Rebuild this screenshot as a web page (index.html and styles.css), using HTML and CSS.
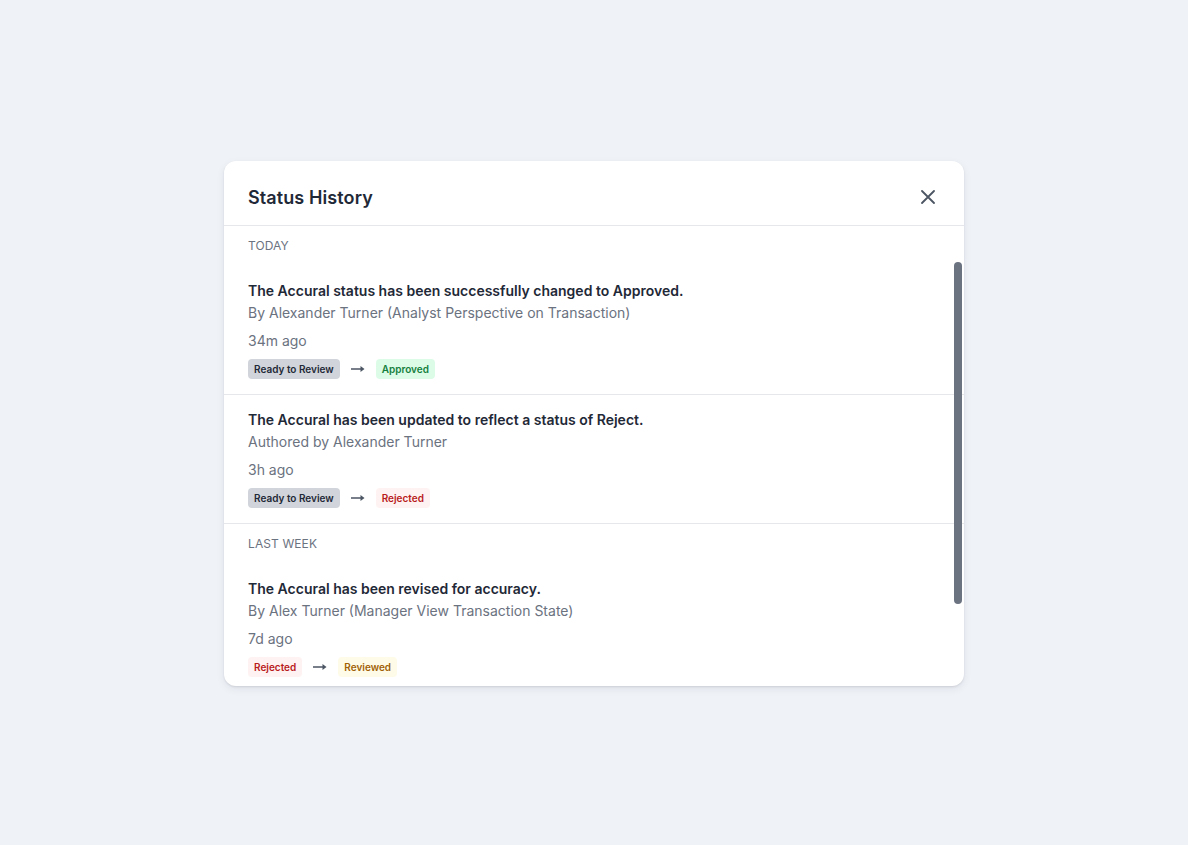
FILE: index.html
```html
<!DOCTYPE html>
<html lang="en">
<head>
<meta charset="utf-8">
<title>Status History</title>
<link rel="stylesheet" href="styles.css">
</head>
<body>
<div class="page">
  <div class="modal">
    <div class="modal-header">
      <h2 class="modal-title">Status History</h2>
      <button class="close-btn" aria-label="Close">
        <svg width="14" height="14" viewBox="0 0 14 14" fill="none"><path d="M1 1L13 13M13 1L1 13" stroke="#4b5563" stroke-width="1.8" stroke-linecap="round"/></svg>
      </button>
    </div>
    <div class="modal-body">
      <div class="scroll-thumb"></div>
      <div class="group-label">Today</div>
      <div class="item">
        <div class="item-title">The Accural status has been successfully changed to Approved.</div>
        <div class="item-sub">By Alexander Turner (Analyst Perspective on Transaction)</div>
        <div class="item-time">34m ago</div>
        <div class="badges">
          <span class="badge badge-gray">Ready to Review</span>
          <svg class="arrow" width="14" height="8" viewBox="0 0 14 8"><path d="M0 4H11" stroke="#4b5563" stroke-width="1.5"/><path d="M9.5 1L13.5 4L9.5 7Z" fill="#4b5563"/></svg>
          <span class="badge badge-green">Approved</span>
        </div>
      </div>
      <div class="item">
        <div class="item-title">The Accural has been updated to reflect a status of Reject.</div>
        <div class="item-sub">Authored by Alexander Turner</div>
        <div class="item-time">3h ago</div>
        <div class="badges">
          <span class="badge badge-gray">Ready to Review</span>
          <svg class="arrow" width="14" height="8" viewBox="0 0 14 8"><path d="M0 4H11" stroke="#4b5563" stroke-width="1.5"/><path d="M9.5 1L13.5 4L9.5 7Z" fill="#4b5563"/></svg>
          <span class="badge badge-red">Rejected</span>
        </div>
      </div>
      <div class="group-label">Last Week</div>
      <div class="item item-last">
        <div class="item-title">The Accural has been revised for accuracy.</div>
        <div class="item-sub">By Alex Turner (Manager View Transaction State)</div>
        <div class="item-time">7d ago</div>
        <div class="badges">
          <span class="badge badge-red">Rejected</span>
          <svg class="arrow" width="14" height="8" viewBox="0 0 14 8"><path d="M0 4H11" stroke="#4b5563" stroke-width="1.5"/><path d="M9.5 1L13.5 4L9.5 7Z" fill="#4b5563"/></svg>
          <span class="badge badge-yellow">Reviewed</span>
        </div>
      </div>
    </div>
  </div>
</div>
</body>
</html>
```
FILE: styles.css
```css
* { box-sizing: border-box; }
html, body { margin: 0; padding: 0; }
body {
  background: #eff2f7;
  font-family: Inter, "Noto Sans", "Liberation Sans", sans-serif;
  color: #1f2937;
  width: 1188px;
  height: 845px;
  overflow: hidden;
}
.page {
  display: flex;
  justify-content: center;
  padding-top: 161px;
}
.modal {
  width: 740px;
  height: 525px;
  background: #fff;
  border-radius: 12px;
  box-shadow: 0 1px 2px rgba(15, 23, 42, 0.10), 0 3px 8px rgba(15, 23, 42, 0.07);
  display: flex;
  flex-direction: column;
  overflow: hidden;
}
.modal-header {
  height: 65px;
  flex: none;
  display: flex;
  align-items: center;
  justify-content: space-between;
  padding: 8px 28px 0 24px;
  border-bottom: 1px solid #e5e7eb;
}
.modal-title {
  margin: 0;
  font-size: 18px;
  font-weight: 600;
  color: #1f2937;
  letter-spacing: 0.1px;
}
.close-btn {
  border: 0;
  background: none;
  padding: 0;
  width: 16px;
  height: 16px;
  display: flex;
  align-items: center;
  justify-content: center;
  cursor: pointer;
}
.modal-body {
  position: relative;
  flex: 1;
  overflow: hidden;
}
.scroll-thumb {
  position: absolute;
  right: 2px;
  top: 36px;
  width: 8px;
  height: 342px;
  border-radius: 4px;
  background: #6b7280;
}
.group-label {
  padding: 12px 24px 12px;
  font-size: 12px;
  line-height: 16px;
  color: #6b7280;
  text-transform: uppercase;
  letter-spacing: 0.1px;
}
.item {
  padding: 15px 24px 15px;
  border-bottom: 1px solid #e5e7eb;
}
.item-last { border-bottom: 0; }
.item-title {
  font-size: 14px;
  line-height: 20px;
  font-weight: 600;
  color: #1f2937;
}
.item-sub {
  margin-top: 2px;
  font-size: 14px;
  line-height: 20px;
  color: #6b7280;
}
.item-time {
  margin-top: 8px;
  font-size: 14px;
  line-height: 20px;
  color: #6b7280;
}
.badges {
  margin-top: 8px;
  display: flex;
  align-items: center;
  gap: 11px;
}
.badge {
  display: inline-flex;
  align-items: center;
  height: 20px;
  padding: 0 6px;
  border-radius: 4px;
  font-size: 10px;
  font-weight: 600;
  line-height: 20px;
}
.badge-gray { background: #d1d5db; color: #1f2937; }
.badge-green { background: #dcfce7; color: #15803d; }
.badge-red { background: #fef2f2; color: #b91c1c; }
.badge-yellow { background: #fefce8; color: #a16207; }
.arrow { flex: none; }
```
